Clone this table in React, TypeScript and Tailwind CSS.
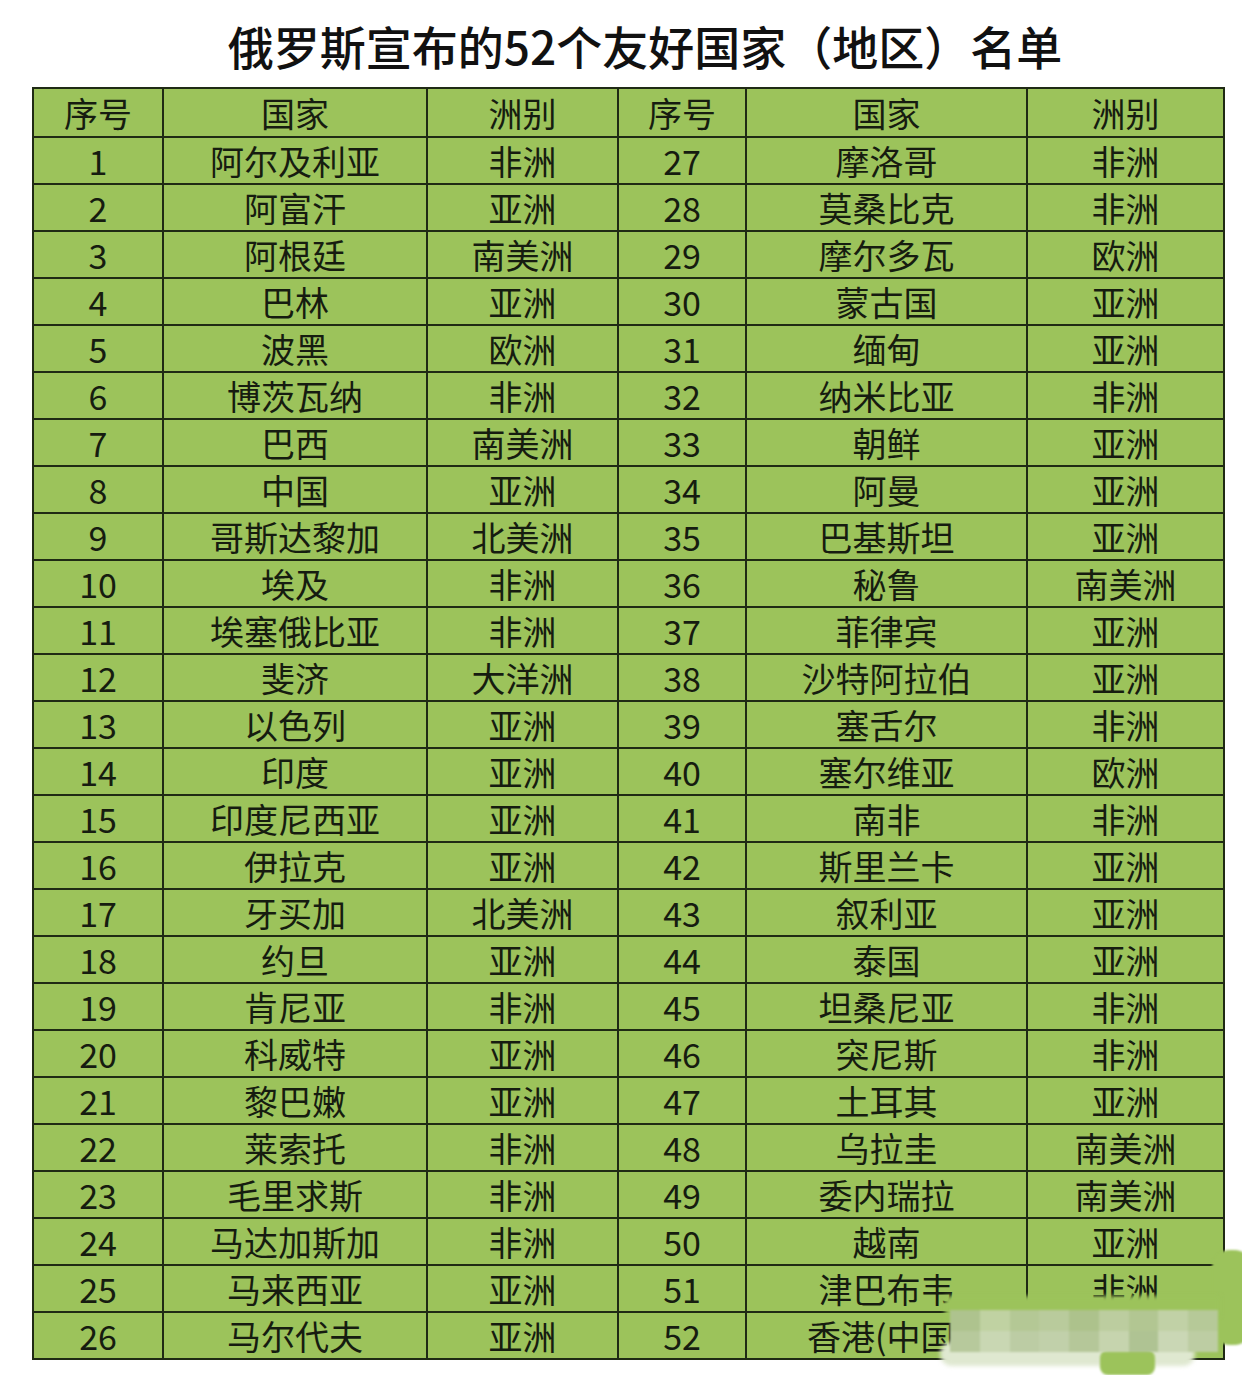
const rows: [number, string, string][] = [
  [1, '阿尔及利亚', '非洲'], [2, '阿富汗', '亚洲'], [3, '阿根廷', '南美洲'], [4, '巴林', '亚洲'],
  [5, '波黑', '欧洲'], [6, '博茨瓦纳', '非洲'], [7, '巴西', '南美洲'], [8, '中国', '亚洲'],
  [9, '哥斯达黎加', '北美洲'], [10, '埃及', '非洲'], [11, '埃塞俄比亚', '非洲'], [12, '斐济', '大洋洲'],
  [13, '以色列', '亚洲'], [14, '印度', '亚洲'], [15, '印度尼西亚', '亚洲'], [16, '伊拉克', '亚洲'],
  [17, '牙买加', '北美洲'], [18, '约旦', '亚洲'], [19, '肯尼亚', '非洲'], [20, '科威特', '亚洲'],
  [21, '黎巴嫩', '亚洲'], [22, '莱索托', '非洲'], [23, '毛里求斯', '非洲'], [24, '马达加斯加', '非洲'],
  [25, '马来西亚', '亚洲'], [26, '马尔代夫', '亚洲'],
  [27, '摩洛哥', '非洲'], [28, '莫桑比克', '非洲'], [29, '摩尔多瓦', '欧洲'], [30, '蒙古国', '亚洲'],
  [31, '缅甸', '亚洲'], [32, '纳米比亚', '非洲'], [33, '朝鲜', '亚洲'], [34, '阿曼', '亚洲'],
  [35, '巴基斯坦', '亚洲'], [36, '秘鲁', '南美洲'], [37, '菲律宾', '亚洲'], [38, '沙特阿拉伯', '亚洲'],
  [39, '塞舌尔', '非洲'], [40, '塞尔维亚', '欧洲'], [41, '南非', '非洲'], [42, '斯里兰卡', '亚洲'],
  [43, '叙利亚', '亚洲'], [44, '泰国', '亚洲'], [45, '坦桑尼亚', '非洲'], [46, '突尼斯', '非洲'],
  [47, '土耳其', '亚洲'], [48, '乌拉圭', '南美洲'], [49, '委内瑞拉', '南美洲'], [50, '越南', '亚洲'],
  [51, '津巴布韦', '非洲'], [52, '香港(中国)', '亚洲'],
]

const cell = 'border-2 border-[#1f2a14] text-center align-middle p-0 leading-none'

// mosaic tones for the blurred watermark
const tiles = [
  ['#aec38e', '#c0d2a2', '#b4c895', '#b9cb9c', '#adc28c', '#bccd9f', '#b2c692', '#c1d1a6', '#b6c998'],
  ['#b7c99c', '#c9d7b3', '#bccca4', '#c1d0aa', '#b5c799', '#c6d4ae', '#afc393', '#cad7b5', '#bdcda3'],
]

export default function App() {
  const left = rows.slice(0, 26)
  const right = rows.slice(26)
  return (
    <div className="relative w-[1242px] h-[1375px] bg-white overflow-hidden text-[#161c10]" style={{ fontFamily: '"Noto Sans CJK SC", "Noto Sans", sans-serif' }}>
      <h1 className="pt-[19px] h-[87px] text-center text-[46px] leading-[52px] font-medium text-[#111] pl-[48px]">
        俄罗斯宣布的52个友好国家（地区）名单
      </h1>
      <table className="ml-[32px] border-collapse bg-[#9cc35b] text-[34px] table-fixed w-[1191px]">
        <colgroup>
          <col className="w-[130px]" />
          <col className="w-[264px]" />
          <col className="w-[191px]" />
          <col className="w-[128px]" />
          <col className="w-[281px]" />
          <col className="w-[197px]" />
        </colgroup>
        <thead>
          <tr className="h-[49px]">
            {['序号', '国家', '洲别', '序号', '国家', '洲别'].map((h, i) => (
              <th key={i} className={cell + ' font-normal'}>{h}</th>
            ))}
          </tr>
        </thead>
        <tbody>
          {left.map((l, i) => {
            const r = right[i]
            return (
              <tr key={l[0]} className="h-[47px]">
                <td className={cell}>{l[0]}</td>
                <td className={cell}>{l[1]}</td>
                <td className={cell}>{l[2]}</td>
                <td className={cell}>{r[0]}</td>
                <td className={cell}>{r[1]}</td>
                <td className={cell}>{r[2]}</td>
              </tr>
            )
          })}
        </tbody>
      </table>

      {/* blurred watermark over the bottom-right corner */}
      <div className="absolute left-[1212px] top-[1250px] w-[40px] h-[95px] rounded-[18px] bg-[#9cc35b] blur-[1px]" />
      <div className="absolute left-[945px] top-[1296px] w-[275px] h-[20px] bg-[#9cc35b] blur-[2px]" />
      <div className="absolute left-[940px] top-[1342px] w-[255px] h-[24px] rounded-[14px] bg-[#dfe8d0] blur-[2px]" />
      <div className="absolute left-[1100px] top-[1350px] w-[55px] h-[25px] rounded-[8px] bg-[#9cc35b] blur-[1px]" />
      <div className="absolute left-[950px] top-[1310px] w-[268px] h-[42px] flex flex-col blur-[1px]">
        {tiles.map((row, ri) => (
          <div key={ri} className="flex flex-1">
            {row.map((c, ci) => (
              <div key={ci} className="flex-1" style={{ backgroundColor: c }} />
            ))}
          </div>
        ))}
      </div>
    </div>
  )
}
